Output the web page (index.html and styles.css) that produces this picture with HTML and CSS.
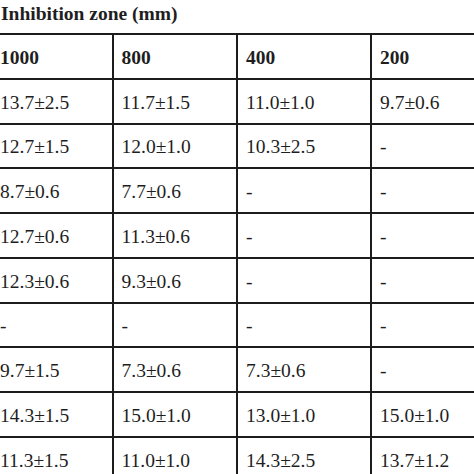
FILE: index.html
```html
<!DOCTYPE html>
<html lang="en">
<head>
<meta charset="utf-8">
<title>Inhibition zone</title>
<link rel="stylesheet" href="styles.css">
</head>
<body>
<div class="page">
  <div class="title">Inhibition zone (mm)</div>
  <div class="grid">
    <div class="cell head">1000</div><div class="cell head">800</div><div class="cell head">400</div><div class="cell head">200</div>
    <div class="cell">13.7±2.5</div><div class="cell">11.7±1.5</div><div class="cell">11.0±1.0</div><div class="cell">9.7±0.6</div>
    <div class="cell">12.7±1.5</div><div class="cell">12.0±1.0</div><div class="cell">10.3±2.5</div><div class="cell">-</div>
    <div class="cell">8.7±0.6</div><div class="cell">7.7±0.6</div><div class="cell">-</div><div class="cell">-</div>
    <div class="cell">12.7±0.6</div><div class="cell">11.3±0.6</div><div class="cell">-</div><div class="cell">-</div>
    <div class="cell">12.3±0.6</div><div class="cell">9.3±0.6</div><div class="cell">-</div><div class="cell">-</div>
    <div class="cell">-</div><div class="cell">-</div><div class="cell">-</div><div class="cell">-</div>
    <div class="cell">9.7±1.5</div><div class="cell">7.3±0.6</div><div class="cell">7.3±0.6</div><div class="cell">-</div>
    <div class="cell">14.3±1.5</div><div class="cell">15.0±1.0</div><div class="cell">13.0±1.0</div><div class="cell">15.0±1.0</div>
    <div class="cell">11.3±1.5</div><div class="cell">11.0±1.0</div><div class="cell">14.3±2.5</div><div class="cell">13.7±1.2</div>
  </div>
</div>
</body>
</html>
```
FILE: styles.css
```css
html, body {
  margin: 0;
  padding: 0;
  background: #ffffff;
  overflow: hidden;
}
body {
  width: 474px;
  height: 474px;
  font-family: "Liberation Serif", "Times New Roman", serif;
  font-size: 19.5px;
  color: #1e1e1e;
}
.page {
  width: 474px;
  height: 474px;
  overflow: hidden;
}
.title {
  height: 33px;
  font-weight: bold;
  line-height: 22px;
  padding-left: 1px;
  box-sizing: border-box;
  padding-top: 3px;
}
.grid {
  display: grid;
  grid-template-columns: 120.5px 122.5px 132px 132px;
  grid-auto-rows: 42.75px;
  gap: 2px;
  padding: 2px;
  margin-left: -11px;
  width: max-content;
  background: #1c1c1c;
}
.cell {
  background: #ffffff;
  display: flex;
  align-items: center;
  padding: 3px 0 0 8px;
  line-height: 22px;
  white-space: nowrap;
}
.cell:nth-child(4n+1) {
  padding-left: 9px;
}
.head {
  font-weight: bold;
}
```
